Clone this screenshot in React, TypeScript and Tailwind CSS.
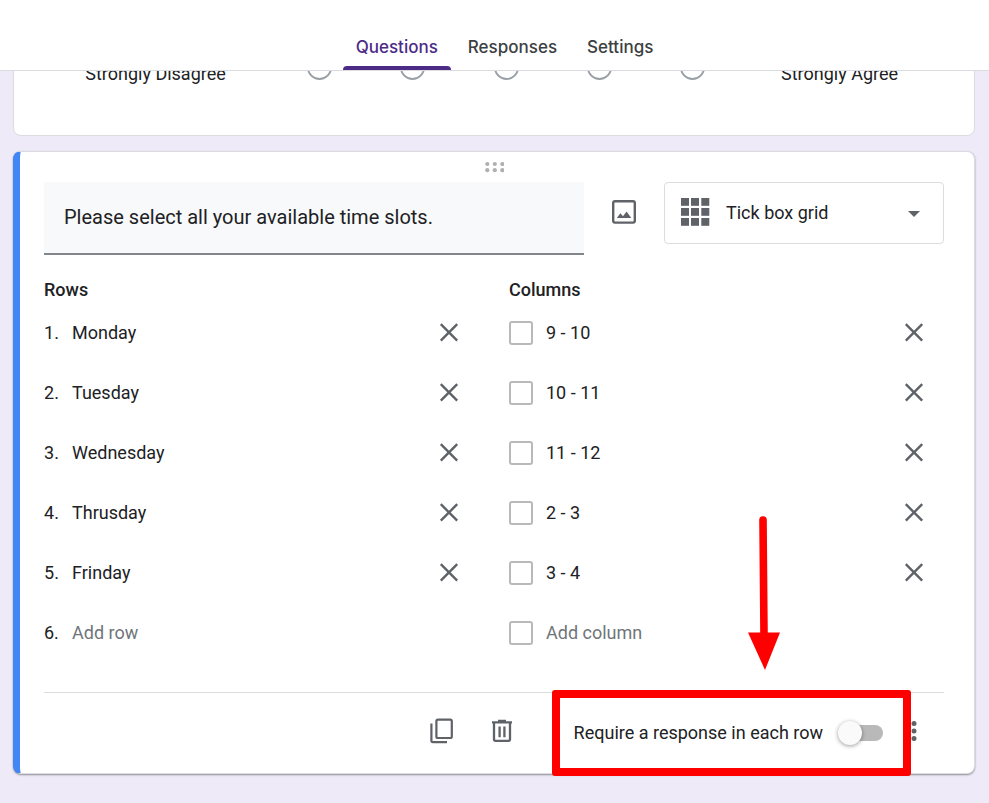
import { useState } from 'react';

const TABS = ['Questions', 'Responses', 'Settings'];
const ROWS = ['Monday', 'Tuesday', 'Wednesday', 'Thrusday', 'Frinday'];
const COLUMNS = ['9 - 10', '10 - 11', '11 - 12', '2 - 3', '3 - 4'];

const RemoveButton = ({ label }: { label: string }) => (
  <button aria-label={label} className="w-[60px] h-10 flex items-center justify-center text-[#5f6368]">
    <svg className="w-6 h-6" viewBox="0 0 24 24" fill="none" stroke="currentColor" strokeWidth="2.4">
      <path d="M3.8 3.2 20.2 19.6M20.2 3.2 3.8 19.6" />
    </svg>
  </button>
);

const Header = () => {
  const [active, setActive] = useState('Questions');
  return (
    <header className="sticky top-0 z-10 h-[71px] bg-white border-b border-[#dadce0] flex items-end justify-center pl-5">
      <nav className="flex gap-1">
        {TABS.map((tab) => (
          <button
            key={tab}
            onClick={() => setActive(tab)}
            className={`flex flex-col items-center font-['Inter',sans-serif] font-medium text-[17px] leading-6 ${
              active === tab ? 'text-[#4c2b87]' : 'text-[#3c4043]'
            }`}
          >
            <span className="px-[13px] pb-[7px]">{tab}</span>
            <span className={`w-full h-1 rounded-t ${active === tab ? 'bg-[#4c2b87]' : ''}`} />
          </button>
        ))}
      </nav>
    </header>
  );
};

const ScaleCard = () => (
  <section className="-mt-6 bg-white border border-[#dadce0] rounded-lg pl-6 pr-[34px] pt-[7px] pb-12">
    <div className="flex items-start">
      <span className="w-[235px] pt-[5px] text-center">Strongly Disagree</span>
      {[1, 2, 3, 4, 5].map((n) => (
        <span key={n} className="flex-1 flex justify-center">
          <input
            type="radio"
            name="scale"
            aria-label={`${n}`}
            className="appearance-none w-[25px] h-[25px] rounded-full border-2 border-[#9aa0a6]"
          />
        </span>
      ))}
      <span className="w-[201px] pt-[5px] text-center">Strongly Agree</span>
    </div>
  </section>
);

const QuestionCard = () => {
  const [required, setRequired] = useState(false);
  return (
    <section className="bg-white border border-l-[7px] border-[#dadce0] border-l-[#4285f4] rounded-lg shadow-[0_1px_2px_rgba(0,0,0,0.4)] pl-6 pr-[30px]">
      {/* DRAG HANDLE */}
      <div className="h-[30px] flex items-center justify-center text-[#b0b0b0]">
        <svg className="w-5 h-3" viewBox="0 0 20 12" fill="currentColor">
          <circle cx="3.3" cy="3" r="2.1" />
          <circle cx="10.8" cy="3" r="2.1" />
          <circle cx="18.3" cy="3" r="2.1" />
          <circle cx="3.3" cy="9.2" r="2.1" />
          <circle cx="10.8" cy="9.2" r="2.1" />
          <circle cx="18.3" cy="9.2" r="2.1" />
        </svg>
      </div>

      {/* QUESTION + TYPE */}
      <div className="flex items-start">
        <input
          aria-label="Question"
          defaultValue="Please select all your available time slots."
          className="flex-1 min-w-0 h-[73px] px-5 pb-0.5 bg-[#f8f9fa] border-b-2 border-[#80868b] text-[20px] outline-none"
        />
        <button aria-label="Add image" className="w-20 h-[60px] flex items-center justify-center text-[#5f6368]">
          <svg className="w-6 h-6" viewBox="0 0 24 24" fill="none">
            <rect x="1.2" y="1.2" width="21.6" height="21.4" rx="1.8" stroke="currentColor" strokeWidth="2.4" />
            <path d="M4.8 18 8.4 13.3 11 16.2 14.6 11.5 19.3 18Z" fill="currentColor" />
          </svg>
        </button>
        <div className="relative w-[280px] h-[62px]">
          <select
            aria-label="Question type"
            className="appearance-none w-full h-full pl-[61px] pb-0.5 bg-white border border-[#dadce0] rounded outline-none"
          >
            <option>Tick box grid</option>
          </select>
          <svg className="absolute left-4 top-4 w-[30px] h-[28px] pointer-events-none" viewBox="0 0 30 28" fill="#5f6368">
            {[1, 11, 21.3].map((x) =>
              [0, 10, 20].map((y) => <rect key={`${x}-${y}`} x={x} y={y} width="8" height="7.8" />)
            )}
          </svg>
          <svg className="absolute right-6 top-[29px] w-3 h-1.5 pointer-events-none" viewBox="0 0 12 6" fill="#5f6368">
            <path d="M0 0h12L6 6z" />
          </svg>
        </div>
      </div>

      {/* ROWS + COLUMNS */}
      <div className="grid grid-cols-2 gap-[30px] pt-6 pb-[29px]">
        <div>
          <h2 className="font-medium leading-[22px] pb-0.5">Rows</h2>
          {ROWS.map((row, i) => (
            <div key={row} className="h-[60px] flex items-center">
              <span className="w-7 pb-0.5">{i + 1}.</span>
              <input aria-label={`Row ${i + 1}`} defaultValue={row} className="flex-1 min-w-0 pb-0.5 outline-none" />
              <RemoveButton label="Remove row" />
            </div>
          ))}
          <div className="h-[60px] flex items-center">
            <span className="w-7 pb-0.5">6.</span>
            <input aria-label="Add row" placeholder="Add row" className="flex-1 min-w-0 pb-0.5 outline-none placeholder:text-[#70757a]" />
          </div>
        </div>
        <div>
          <h2 className="font-medium leading-[22px] pb-0.5">Columns</h2>
          {COLUMNS.map((column, i) => (
            <div key={column} className="h-[60px] flex items-center">
              <input
                type="checkbox"
                aria-label={column}
                className="appearance-none w-6 h-6 mr-[13px] border-2 border-[#b9b9b9] rounded-[3px]"
              />
              <input aria-label={`Column ${i + 1}`} defaultValue={column} className="flex-1 min-w-0 pb-0.5 outline-none" />
              <RemoveButton label="Remove column" />
            </div>
          ))}
          <div className="h-[60px] flex items-center">
            <input
              type="checkbox"
              aria-label="New column"
              className="appearance-none w-6 h-6 mr-[13px] border-2 border-[#b9b9b9] rounded-[3px]"
            />
            <input aria-label="Add column" placeholder="Add column" className="flex-1 min-w-0 pb-0.5 outline-none placeholder:text-[#70757a]" />
          </div>
        </div>
      </div>

      {/* FOOTER */}
      <div className="h-[81px] border-t border-[#dadce0] flex items-center justify-end">
        <button aria-label="Duplicate" className="w-[60px] h-12 pb-1 flex items-center justify-center text-[#5f6368]">
          <svg className="w-6 h-[26px]" viewBox="0 0 24 26" fill="none" stroke="currentColor" strokeWidth="2.2">
            <rect x="6.4" y="1.6" width="15.4" height="18.4" rx="1.6" />
            <path d="M1.4 5.5V22.6a1.6 1.6 0 0 0 1.6 1.6H17" />
          </svg>
        </button>
        <button aria-label="Delete" className="w-[60px] h-12 pb-1 flex items-center justify-center text-[#5f6368]">
          <svg className="w-6 h-6" viewBox="0 0 24 24" fill="none" stroke="currentColor" strokeWidth="2.3">
            <path d="M2 3.3H22M8 1.8H16M4 3.3V20.3a1.6 1.6 0 0 0 1.6 1.6H18.4a1.6 1.6 0 0 0 1.6-1.6V3.3M9.6 7.5V18.3M14.4 7.5V18.3" />
          </svg>
        </button>
        <div className="relative h-full flex items-center ml-[42px]">
          <label htmlFor="required" className="pr-[15px] pb-0.5">
            Require a response in each row
          </label>
          <button
            id="required"
            role="switch"
            aria-checked={required}
            onClick={() => setRequired(!required)}
            className="w-[45px] h-[25px] flex items-center rounded-full"
          >
            <span className={`w-full h-4 flex items-center rounded-full bg-linear-to-r from-transparent from-20% to-20% ${required ? 'to-[#b39ddb] justify-end' : 'to-[#b9b9b9]'}`}>
              <span className="w-6 h-6 rounded-full bg-[#fafafa] shadow-[0_1px_4px_rgba(0,0,0,0.4)]" />
            </span>
          </button>
          {/* HIGHLIGHT */}
          <div className="absolute -left-[22px] -right-7 -top-[3px] -bottom-[3px] border-8 border-[#ff0000] rounded-[3px] pointer-events-none" />
          <svg className="absolute right-[103px] bottom-full mb-[23px] w-8 h-[155px] pointer-events-none" viewBox="0 0 32 155" fill="#ff0000">
            <path d="M15 5 16 120" stroke="#ff0000" strokeWidth="7.6" strokeLinecap="round" />
            <path d="M0 117.5H32L17 155Z" />
          </svg>
        </div>
        <button aria-label="More options" className="w-[61px] h-12 flex items-center justify-center text-[#5f6368]">
          <svg className="w-1.5 h-6" viewBox="0 0 6 24" fill="currentColor">
            <circle cx="3" cy="2.5" r="2.5" />
            <circle cx="3" cy="10" r="2.5" />
            <circle cx="3" cy="17.5" r="2.5" />
          </svg>
        </button>
      </div>
    </section>
  );
};

const App = () => (
  <div className="min-h-screen bg-[#eeeaf7] text-[#202124] font-['Roboto',sans-serif] text-[18px]">
    <Header />
    <main className="flex flex-col gap-[15px] pl-[13px] pr-3.5">
      <ScaleCard />
      <QuestionCard />
    </main>
  </div>
);

export default App;
